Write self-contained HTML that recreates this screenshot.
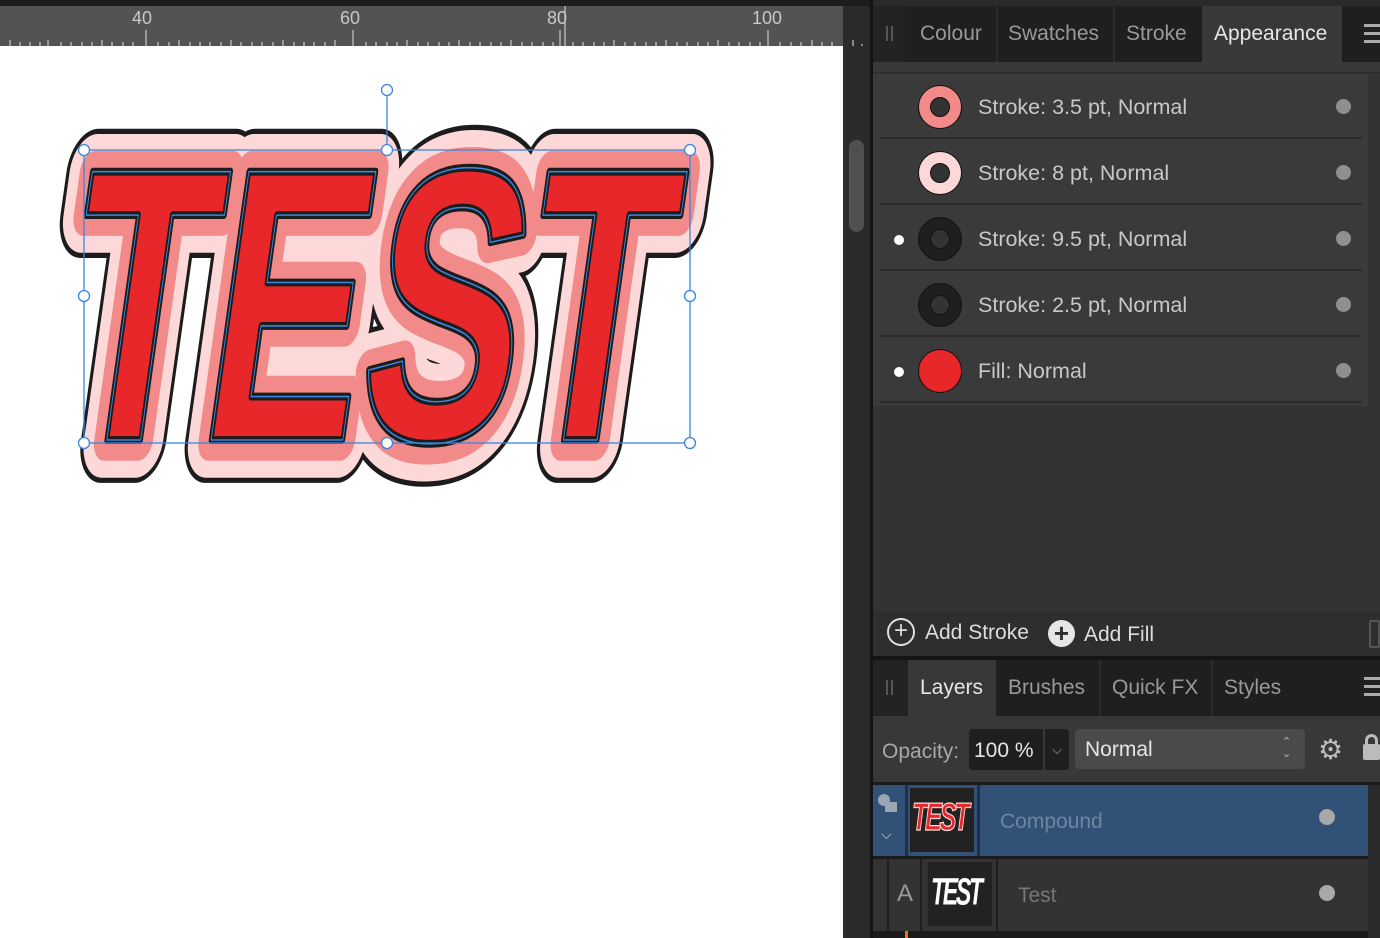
<!DOCTYPE html>
<html><head><meta charset="utf-8"><style>
*{margin:0;padding:0;box-sizing:border-box}
body{width:1380px;height:938px;overflow:hidden;background:#2a2a2a;font-family:"Liberation Sans",sans-serif;position:relative}
.a{position:absolute}
.t{color:#a8a8a8;font-size:21px;position:absolute}
.row{position:absolute;left:880px;width:482px;height:64px;border-bottom:2px solid #2a2a2a}
.row .c{position:absolute;left:38px;top:10px;width:44px;height:44px;border-radius:50%;border:1px solid #111}
.row .c i{position:absolute;left:11px;top:11px;width:20px;height:20px;border-radius:50%;background:#333;border:1px solid #111}
.row span{position:absolute;left:98px;top:20px;font-size:21.5px;color:#c8c8c8}
.row b{position:absolute;left:456px;top:24px;width:15px;height:15px;border-radius:50%;background:#8f8f8f}
.row em{position:absolute;left:14px;top:28px;width:10px;height:10px;border-radius:50%;background:#fff}
</style></head><body>
<div class="a" style="left:0;top:0;width:843px;height:938px;background:#fff"></div>
<div class="a" style="left:0;top:0;width:870px;height:6px;background:#1c1c1c"></div>
<div class="a" style="left:0;top:6px;width:843px;height:40px;background:#535353"></div>
<svg class="a" style="left:0;top:6px" width="870" height="40">
<g fill="#c8c8c8" font-size="18" font-family="Liberation Sans">
<text x="132" y="18">40</text><text x="340" y="18">60</text><text x="547" y="18">80</text><text x="752" y="18">100</text></g>
<g stroke="#c8c8c8" stroke-width="1.2">
<path d="M146 24V40M353 24V40M560 24V40M768 24V40M565 0V40"/>
<path d="M10 34V40M20 36V40M30 36V40M40 36V40M48 34V40M61 36V40M71 36V40M82 36V40M92 36V40M102 34V40M112 36V40M123 36V40M133 36V40M158 36V40M169 36V40M179 34V40M190 36V40M200 36V40M210 36V40M221 36V40M231 34V40M241 36V40M252 36V40M262 36V40M273 36V40M283 34V40M294 36V40M304 36V40M314 36V40M325 36V40M335 34V40M366 36V40M376 36V40M387 36V40M397 36V40M407 34V40M418 36V40M428 36V40M439 36V40M449 36V40M459 34V40M470 36V40M480 36V40M491 36V40M501 36V40M511 34V40M522 36V40M532 36V40M543 36V40M553 36V40M573 36V40M583 36V40M594 36V40M604 36V40M614 34V40M625 36V40M635 36V40M646 36V40M656 36V40M666 34V40M677 36V40M687 36V40M698 36V40M708 36V40M718 34V40M729 36V40M739 36V40M750 36V40M760 36V40M780 36V40M791 36V40M801 36V40M812 34V40M822 36V40M832 36V40M853 34V40M862 38V40"/></g></svg>
<div class="a" style="left:843px;top:46px;width:27px;height:892px;background:#2b2b2b"></div>
<div class="a" style="left:849px;top:140px;width:15px;height:92px;border-radius:8px;background:#505050"></div>
<div class="a" style="left:870px;top:0;width:3px;height:938px;background:#141414"></div>

<svg class="a" style="left:0;top:46px" width="843" height="460">
<g transform="translate(0,394) skewX(-8)" font-family="Liberation Sans" font-weight="bold" font-size="300" stroke-linejoin="round">
<g transform="scale(1,1.3)">
<text x="52" y="0" textLength="600" lengthAdjust="spacingAndGlyphs" fill="#1c1c1c" stroke="#1c1c1c" stroke-width="66">TEST</text>
<text x="52" y="0" textLength="600" lengthAdjust="spacingAndGlyphs" fill="#fcd8d8" stroke="#fcd8d8" stroke-width="58">TEST</text>
<text x="52" y="0" textLength="600" lengthAdjust="spacingAndGlyphs" fill="#f28a8a" stroke="#f28a8a" stroke-width="32">TEST</text>
<text x="52" y="0" textLength="600" lengthAdjust="spacingAndGlyphs" fill="#e8272a" stroke="#1c1c1c" stroke-width="6">TEST</text>
<text x="52" y="0" textLength="600" lengthAdjust="spacingAndGlyphs" fill="none" stroke="#3a86e0" stroke-width="1.2">TEST</text>
</g></g>
<g stroke="#3a86e0" stroke-width="1.3" fill="#fff">
<rect x="84" y="104" width="606" height="293" fill="none"/>
<path d="M387 44V104"/>
<circle cx="387" cy="44" r="5.5"/><circle cx="84" cy="104" r="5.5"/><circle cx="387" cy="104" r="5.5"/><circle cx="690" cy="104" r="5.5"/>
<circle cx="84" cy="250" r="5.5"/><circle cx="690" cy="250" r="5.5"/>
<circle cx="84" cy="397" r="5.5"/><circle cx="387" cy="397" r="5.5"/><circle cx="690" cy="397" r="5.5"/></g>
</svg>

<div class="a" style="left:873px;top:6px;width:507px;height:56px;background:#1f1f1f"></div>
<div class="a" style="left:873px;top:6px;width:32px;height:56px;background:#232323"></div>
<div class="a" style="left:886px;top:26px;width:2px;height:15px;background:#555"></div><div class="a" style="left:891px;top:26px;width:2px;height:15px;background:#555"></div>
<div class="t" style="left:920px;top:22px;color:#999">Colour</div>
<div class="a" style="left:996px;top:6px;width:2px;height:56px;background:#2d2d2d"></div>
<div class="t" style="left:1008px;top:22px;color:#999">Swatches</div>
<div class="a" style="left:1113px;top:6px;width:2px;height:56px;background:#2d2d2d"></div>
<div class="t" style="left:1126px;top:22px;color:#999">Stroke</div>
<div class="a" style="left:1202px;top:6px;width:140px;height:56px;background:#383838"></div>
<div class="t" style="left:1214px;top:22px;color:#e6e6e6">Appearance</div>
<div class="a" style="left:1364px;top:24px;width:16px;height:3px;background:#aaa"></div><div class="a" style="left:1364px;top:32px;width:16px;height:3px;background:#aaa"></div><div class="a" style="left:1364px;top:40px;width:16px;height:3px;background:#aaa"></div>
<div class="a" style="left:873px;top:62px;width:507px;height:550px;background:#333"></div>
<div class="a" style="left:873px;top:62px;width:507px;height:10px;background:#393939"></div>
<div class="a" style="left:873px;top:72px;width:507px;height:2px;background:#2e2e2e"></div>
<div class="a" style="left:873px;top:74px;width:495px;height:332px;background:#3a3a3a"></div>
<div class="row" style="top:75px"><div class="c" style="background:#f28a8a"><i></i></div><span>Stroke: 3.5 pt, Normal</span><b></b></div>
<div class="row" style="top:141px"><div class="c" style="background:#fcd8d8"><i></i></div><span>Stroke: 8 pt, Normal</span><b></b></div>
<div class="row" style="top:207px"><em></em><div class="c" style="background:#1f1f1f"><i></i></div><span>Stroke: 9.5 pt, Normal</span><b></b></div>
<div class="row" style="top:273px"><div class="c" style="background:#1f1f1f"><i></i></div><span>Stroke: 2.5 pt, Normal</span><b></b></div>
<div class="row" style="top:339px"><em></em><div class="c" style="background:#e8272a"></div><span>Fill: Normal</span><b></b></div>
<div class="a" style="left:873px;top:612px;width:507px;height:44px;background:#2e2e2e"></div>
<div class="a" style="left:887px;top:618px;width:28px;height:28px;border-radius:50%;border:2px solid #ddd;color:#ddd;font-size:24px;line-height:22px;text-align:center">+</div>
<div class="t" style="left:925px;top:621px;color:#ddd">Add Stroke</div>
<div class="a" style="left:1048px;top:620px;width:27px;height:27px;border-radius:50%;background:#e6e6e6;color:#2e2e2e;font-size:26px;font-weight:bold;line-height:26px;text-align:center">+</div>
<div class="t" style="left:1084px;top:623px;color:#ddd">Add Fill</div>
<div class="a" style="left:1369px;top:620px;width:11px;height:28px;border:2px solid #555;border-radius:2px"></div>
<div class="a" style="left:873px;top:656px;width:507px;height:4px;background:#141414"></div>

<div class="a" style="left:873px;top:660px;width:507px;height:56px;background:#1f1f1f"></div>
<div class="a" style="left:873px;top:660px;width:35px;height:56px;background:#232323"></div>
<div class="a" style="left:886px;top:680px;width:2px;height:15px;background:#555"></div><div class="a" style="left:891px;top:680px;width:2px;height:15px;background:#555"></div>
<div class="a" style="left:908px;top:660px;width:88px;height:56px;background:#383838"></div>
<div class="t" style="left:920px;top:676px;color:#e6e6e6">Layers</div>
<div class="t" style="left:1008px;top:676px;color:#999">Brushes</div>
<div class="a" style="left:1099px;top:660px;width:2px;height:56px;background:#2d2d2d"></div>
<div class="t" style="left:1112px;top:676px;color:#999">Quick FX</div>
<div class="a" style="left:1211px;top:660px;width:2px;height:56px;background:#2d2d2d"></div>
<div class="t" style="left:1224px;top:676px;color:#999">Styles</div>
<div class="a" style="left:1364px;top:677px;width:16px;height:3px;background:#aaa"></div><div class="a" style="left:1364px;top:685px;width:16px;height:3px;background:#aaa"></div><div class="a" style="left:1364px;top:693px;width:16px;height:3px;background:#aaa"></div>
<div class="a" style="left:873px;top:716px;width:507px;height:66px;background:#383838"></div>
<div class="t" style="left:882px;top:740px;color:#a8a8a8">Opacity:</div>
<div class="a" style="left:969px;top:729px;width:74px;height:41px;background:#1f1f1f;border-radius:4px 0 0 4px"></div>
<div class="t" style="left:974px;top:739px;color:#e6e6e6">100 %</div>
<div class="a" style="left:1045px;top:729px;width:24px;height:41px;background:#1f1f1f;border-radius:0 4px 4px 0;color:#aaa;font-size:13px;text-align:center;line-height:41px">⌵</div>
<div class="a" style="left:1075px;top:729px;width:230px;height:40px;background:#4a4a4a;border-radius:4px"></div>
<div class="t" style="left:1085px;top:738px;color:#e6e6e6">Normal</div>
<div class="a" style="left:1282px;top:736px;color:#bbb;font-size:11px;line-height:12px">⌃<br>⌄</div>
<div class="a" style="left:1318px;top:733px;color:#bbb;font-size:28px">⚙</div>
<div class="a" style="left:1363px;top:744px;width:17px;height:16px;background:#bbb;border-radius:2px"></div>
<div class="a" style="left:1365px;top:734px;width:13px;height:14px;border:3px solid #bbb;border-bottom:0;border-radius:7px 7px 0 0"></div>
<div class="a" style="left:873px;top:782px;width:507px;height:3px;background:#1a1a1a"></div>
<div class="a" style="left:873px;top:785px;width:495px;height:71px;background:#315176"></div>
<div class="a" style="left:905px;top:785px;width:3px;height:71px;background:#1f2f45"></div>
<div class="a" style="left:977px;top:785px;width:3px;height:71px;background:#1f2f45"></div>
<div class="a" style="left:878px;top:794px;width:12px;height:12px;border-radius:50%;background:#9aa6b4"></div>
<div class="a" style="left:885px;top:802px;width:12px;height:10px;background:#9aa6b4"></div>
<div class="a" style="left:881px;top:826px;color:#ccc;font-size:14px">⌵</div>
<div class="a" style="left:910px;top:788px;width:64px;height:64px;background:#222;overflow:hidden"><div style="font:italic bold 30px 'Liberation Sans',sans-serif;color:#e8272a;transform:scale(0.85,1.3);transform-origin:0 0;margin:8px 0 0 2px;letter-spacing:-3px;-webkit-text-stroke:1px #fcd8d8;white-space:nowrap">TEST</div></div>
<div class="t" style="left:1000px;top:810px;color:#6f86a2">Compound</div>
<div class="a" style="left:1319px;top:809px;width:16px;height:16px;border-radius:50%;background:#a8a8a8"></div>
<div class="a" style="left:873px;top:856px;width:495px;height:3px;background:#1a1a1a"></div>
<div class="a" style="left:873px;top:859px;width:495px;height:72px;background:#333"></div>
<div class="a" style="left:887px;top:859px;width:2px;height:72px;background:#1f1f1f"></div>
<div class="a" style="left:920px;top:859px;width:2px;height:72px;background:#1f1f1f"></div>
<div class="a" style="left:996px;top:859px;width:2px;height:72px;background:#1f1f1f"></div>
<div class="t" style="left:897px;top:880px;color:#999;font-size:24px">A</div>
<div class="a" style="left:928px;top:862px;width:64px;height:64px;background:#222;overflow:hidden"><div style="font:italic bold 29px 'Liberation Sans',sans-serif;color:#fff;transform:scale(0.8,1.3);transform-origin:0 0;margin:10px 0 0 3px;letter-spacing:-3px;white-space:nowrap">TEST</div></div>
<div class="t" style="left:1018px;top:884px;color:#777">Test</div>
<div class="a" style="left:1319px;top:885px;width:16px;height:16px;border-radius:50%;background:#a8a8a8"></div>
<div class="a" style="left:873px;top:931px;width:495px;height:7px;background:#1a1a1a"></div>
<div class="a" style="left:905px;top:931px;width:3px;height:7px;background:#f07020"></div>
<div class="a" style="left:1368px;top:785px;width:12px;height:153px;background:#2a2a2a"></div>
</body></html>
